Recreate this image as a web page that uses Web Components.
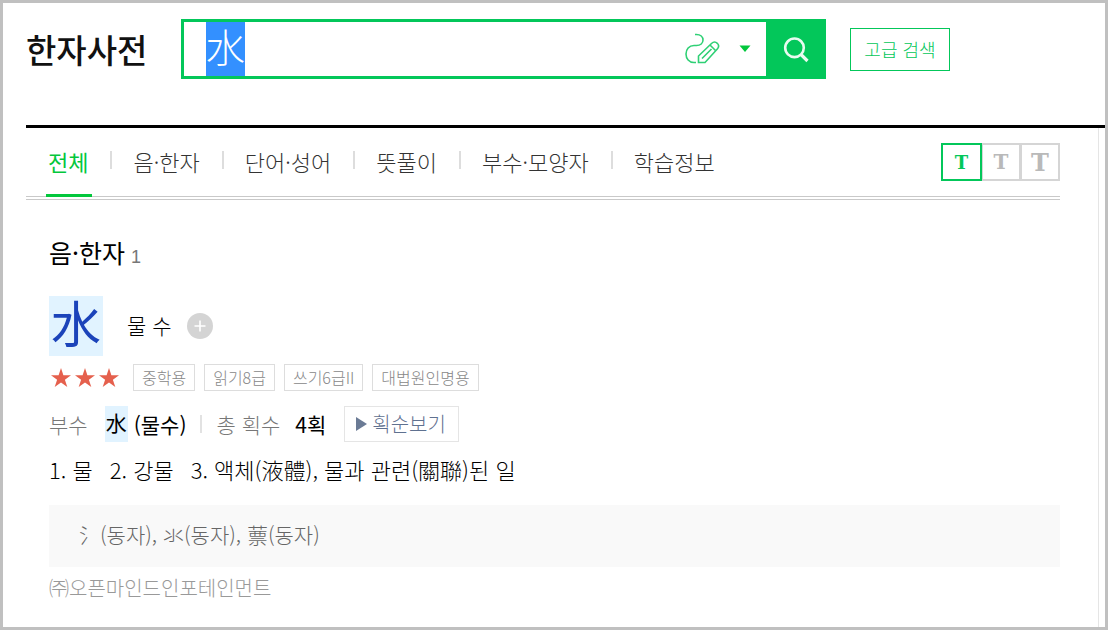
<!DOCTYPE html>
<html lang="ko">
<head>
<meta charset="utf-8">
<meta name="viewport" content="width=device-width, initial-scale=1">
<title>한자사전</title>
<style>
  * { box-sizing: border-box; }
  body {
    --green: #03c75a;
    --line: #c9c9c9;
    --mark: #e1f3ff;
    --hanja: "Liberation Sans", "Noto Sans CJK KR", sans-serif;
    margin: 0;
    min-height: 100vh;
    border: 3px solid #c0c0c0;
    background: #fff;
    color: #000;
    font-family: "Noto Sans CJK KR", sans-serif;
    font-weight: 300;
    font-size: 21px;
    display: flex;
    flex-direction: column;
  }
</style>
</head>
<body>
<dict-header></dict-header>
<dict-page>
  <dict-tabs slot="tabs"></dict-tabs>
  <hanja-entry></hanja-entry>
</dict-page>

<script>
class DictSearch extends HTMLElement {
  constructor() {
    super();
    this.attachShadow({ mode: "open" });
    this.shadowRoot.innerHTML = `
      <style>
        * { box-sizing: border-box; }
        :host { display: block; flex: 0 1 645px; min-width: 0; }
        form {
          display: flex;
          align-items: stretch;
          height: 60px;
          border: 3px solid var(--green);
          margin: 0;
        }
        input {
          flex: 1;
          width: 100%;
          min-width: 0;
          padding: 0 0 0 22px;
          border: 0;
          outline: 0;
          background: #fff;
          font-family: var(--hanja);
          font-weight: 300;
          font-size: 39px;
          line-height: 54px;
        }
        input::selection { background: #3390ff; color: #fff; }
        button {
          display: flex;
          flex: none;
          align-items: center;
          justify-content: center;
          padding: 0;
          border: 0;
          background: none;
          cursor: pointer;
        }
        .pen { width: 44px; }
        .more { width: 42px; }
        .go { width: 57px; background: var(--green); }
      </style>
      <form role="search">
        <input type="text" value="水" aria-label="검색어" autocomplete="off" spellcheck="false">
        <button class="pen" type="button" aria-label="필기인식기">
          <svg width="36" height="32" viewBox="0 0 36 32" fill="none" stroke="#2fd075" stroke-width="1.6">
            <path d="M11 1.500h1.500c4 0 6.500 2.500 6.500 5.500s-2.500 5.500-6.500 5.500H10C5 12.500 2 16.500 2 21s3 8.500 8 8.500h2"/>
            <path d="M14.500 29.500V23L27.500 10.500c2-1.900 4.200-1.700 5.800-.2 1.600 1.600 1.700 3.800 0 5.700L21 29.500z"/>
            <path d="M26 12l5.500 5.500M18 25.500l9.500-9.500"/>
          </svg>
        </button>
        <button class="more" type="button" aria-label="더보기">
          <svg width="12" height="8" viewBox="0 0 12 8"><path d="M0.500 0.500h11L6 7z" fill="#03c73c"/></svg>
        </button>
        <button class="go" type="submit" aria-label="검색">
          <svg width="28" height="28" viewBox="0 0 28 28" fill="none" stroke="#e9fbf0" stroke-width="2.600">
            <circle cx="13.500" cy="12.800" r="9.300"/>
            <path d="M20 19.500l6.500 6.500" stroke-width="3.200"/>
          </svg>
        </button>
      </form>
    `;
    this.input = this.shadowRoot.querySelector("input");
    this.shadowRoot
      .querySelector("form")
      .addEventListener("submit", (event) => event.preventDefault());
  }

  connectedCallback() {
    this.input.focus();
    this.input.select();
  }
}

class DictHeader extends HTMLElement {
  constructor() {
    super();
    this.attachShadow({ mode: "open" });
    this.shadowRoot.innerHTML = `
      <style>
        * { box-sizing: border-box; }
        :host {
          display: block;
          margin-left: 23px;
          padding: 16px 0 46px;
          border-bottom: 3px solid #000;
        }
        header { display: flex; align-items: center; }
        h1 {
          width: 155px;
          flex: none;
          margin: 0;
          font-size: 33px;
          font-weight: 500;
          line-height: 60px;
          white-space: nowrap;
        }
        h1 a { color: #111; text-decoration: none; }
        .advanced {
          flex: none;
          width: 100px;
          height: 43px;
          margin-left: 24px;
          padding: 0;
          border: 1px solid var(--green);
          background: #fff;
          color: var(--green);
          font: inherit;
          font-size: 18px;
          cursor: pointer;
        }
      </style>
      <header>
        <h1><a href="#">한자사전</a></h1>
        <dict-search></dict-search>
        <button class="advanced" type="button">고급 검색</button>
      </header>
    `;
  }
}

class DictPage extends HTMLElement {
  constructor() {
    super();
    this.attachShadow({ mode: "open" });
    this.shadowRoot.innerHTML = `
      <style>
        :host {
          flex: 1;
          display: block;
          margin: 0 6px 0 23px;
          border-right: 1px solid #e5e5e5;
          padding-right: 38px;
        }
        main { padding-left: 23px; }
      </style>
      <slot name="tabs"></slot>
      <main><slot></slot></main>
    `;
  }
}

class DictTabs extends HTMLElement {
  constructor() {
    super();
    this.attachShadow({ mode: "open" });
    this.shadowRoot.innerHTML = `
      <style>
        * { box-sizing: border-box; }
        :host {
          display: flex;
          justify-content: space-between;
          height: 72px;
          border-bottom: 4px double var(--line);
        }
        nav { display: flex; padding-left: 20px; }
        a {
          display: flex;
          align-items: center;
          height: 69px;
          padding: 0 4px 0 2px;
          border-bottom: 3px solid transparent;
          color: #333;
          font-size: 22px;
          text-decoration: none;
          white-space: nowrap;
        }
        a[aria-current] {
          color: #03c73c;
          font-weight: 400;
          border-color: #03c73c;
        }
        nav i {
          align-self: center;
          width: 2px;
          height: 18px;
          margin: 0 19px 4px 18px;
          background: #ddd;
        }
        .sizes { display: flex; margin-top: 15px; }
        .sizes button {
          width: 40px;
          height: 38px;
          margin-left: -1px;
          padding: 0;
          border: 2px solid #d5d5d5;
          background: #fff;
          color: #b9b9b9;
          font-family: "DejaVu Serif", serif;
          font-weight: 700;
          font-size: 20px;
          cursor: pointer;
        }
        .sizes button:nth-child(1) { font-size: 18px; }
        .sizes button:nth-child(3) { font-size: 24px; }
        .sizes button[aria-pressed="true"] {
          width: 41px;
          z-index: 1;
          border-color: var(--green);
          color: var(--green);
        }
      </style>
      <nav>
        <a href="#" aria-current="page">전체</a><i></i>
        <a href="#">음·한자</a><i></i>
        <a href="#">단어·성어</a><i></i>
        <a href="#">뜻풀이</a><i></i>
        <a href="#">부수·모양자</a><i></i>
        <a href="#">학습정보</a>
      </nav>
      <div class="sizes" role="group" aria-label="글자 크기">
        <button type="button" aria-pressed="true">T</button>
        <button type="button" aria-pressed="false">T</button>
        <button type="button" aria-pressed="false">T</button>
      </div>
    `;
    const buttons = this.shadowRoot.querySelectorAll(".sizes button");
    buttons.forEach((button) =>
      button.addEventListener("click", () =>
        buttons.forEach((b) => b.setAttribute("aria-pressed", b === button))
      )
    );
  }
}

class HanjaEntry extends HTMLElement {
  constructor() {
    super();
    this.attachShadow({ mode: "open" });
    const star = `<svg width="20" height="20" viewBox="0 0 20 20"><path d="M10 0l2.400 7.200H20l-6.100 4.500 2.400 7.300L10 14.500 3.700 19l2.400-7.300L0 7.200h7.600z" fill="#e5604d"/></svg>`;
    this.shadowRoot.innerHTML = `
      <style>
        * { box-sizing: border-box; }
        :host { display: block; }
        h2 {
          display: flex;
          align-items: baseline;
          gap: 6px;
          margin: 36px 0 0;
          font-size: 25px;
          font-weight: 400;
          line-height: 32px;
        }
        h2 span {
          color: #777;
          font-family: "Liberation Sans", sans-serif;
          font-size: 18px;
        }
        .row { display: flex; align-items: center; }
        .word { margin-top: 23px; }
        .word a {
          width: 54px;
          height: 60px;
          background: var(--mark);
          color: #1b43ba;
          font-family: var(--hanja);
          font-size: 50px;
          font-weight: 400;
          line-height: 60px;
          text-align: center;
          text-decoration: none;
        }
        .word p { margin: 0 15px 0 24px; padding-bottom: 3px; }
        .word button {
          display: flex;
          padding: 0;
          border: 0;
          background: none;
          cursor: pointer;
        }
        .grade { margin-top: 8px; gap: 9px; }
        .stars {
          display: flex;
          gap: 4px;
          width: 75px;
          padding-left: 2px;
        }
        .tag {
          height: 27px;
          padding: 0 8px;
          border: 1px solid #ddd;
          color: #888;
          font-size: 16px;
          line-height: 25px;
          white-space: nowrap;
        }
        .info { margin-top: 15px; color: #777; line-height: 36px; }
        .info a {
          margin: 0 6px 0 17px;
          padding: 0 1px;
          background: var(--mark);
          color: #000;
          font-family: var(--hanja);
          font-weight: 400;
          text-decoration: none;
        }
        .info b { color: #000; font-weight: 400; }
        .info i { width: 2px; height: 18px; margin: 0 14px; background: #e2e2e2; }
        .info span + b { margin-left: 15px; }
        .info b + button { margin-left: 18px; }
        .info button {
          display: flex;
          align-items: center;
          gap: 5px;
          height: 36px;
          padding: 0 12px 0 11px;
          border: 1px solid #e5e5e5;
          background: #fff;
          color: #5f7190;
          font: inherit;
          font-size: 20px;
          cursor: pointer;
        }
        ol {
          display: flex;
          gap: 17px;
          margin: 11px 0 0;
          padding: 0;
          list-style: none;
          font-size: 22px;
          line-height: 32px;
        }
        .variants {
          margin: 20px 0 0;
          padding: 0 30px 4px;
          background: #f9f9f9;
          color: #666;
          line-height: 58px;
        }
        .source { margin: 6px 0 0; font-size: 20px; line-height: 30px; }
        .source a { color: #999; text-decoration: none; }
      </style>
      <h2>음·한자 <span>1</span></h2>
      <div class="row word">
        <a href="#">水</a>
        <p>물 수</p>
        <button type="button" aria-label="단어장에 추가">
          <svg width="26" height="26" viewBox="0 0 26 26">
            <circle cx="13" cy="13" r="13" fill="#d4d4d4"/>
            <path d="M13 7.500v11M7.500 13h11" stroke="#fff" stroke-width="1.600"/>
          </svg>
        </button>
      </div>
      <div class="row grade">
        <div class="stars" role="img" aria-label="별 3개">${star.repeat(3)}</div>
        <span class="tag">중학용</span>
        <span class="tag">읽기8급</span>
        <span class="tag">쓰기6급II</span>
        <span class="tag">대법원인명용</span>
      </div>
      <div class="row info">
        <span>부수</span>
        <a href="#">水</a>
        <b>(물수)</b>
        <i></i>
        <span>총 획수</span>
        <b>4획</b>
        <button type="button">
          <svg width="11" height="14" viewBox="0 0 11 14"><path d="M0 0l11 7-11 7z" fill="#6b7b95"/></svg>
          획순보기
        </button>
      </div>
      <ol>
        <li>1. 물</li>
        <li>2. 강물</li>
        <li>3. 액체(液體), 물과 관련(關聯)된 일</li>
      </ol>
      <p class="variants">氵(동자), 氺(동자), 蔈(동자)</p>
      <p class="source"><a href="#">㈜오픈마인드인포테인먼트</a></p>
    `;
  }
}

customElements.define("dict-search", DictSearch);
customElements.define("dict-header", DictHeader);
customElements.define("dict-page", DictPage);
customElements.define("dict-tabs", DictTabs);
customElements.define("hanja-entry", HanjaEntry);
</script>
</body>
</html>
